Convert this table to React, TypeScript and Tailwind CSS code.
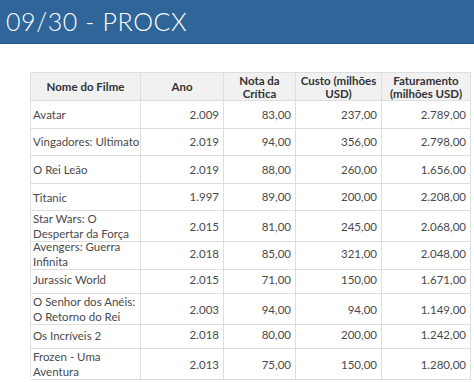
const rows: [string[], string, string, string, string][] = [
  [["Avatar"], "2.009", "83,00", "237,00", "2.789,00"],
  [["Vingadores: Ultimato"], "2.019", "94,00", "356,00", "2.798,00"],
  [["O Rei Leão"], "2.019", "88,00", "260,00", "1.656,00"],
  [["Titanic"], "1.997", "89,00", "200,00", "2.208,00"],
  [["Star Wars: O", "Despertar da Força"], "2.015", "81,00", "245,00", "2.068,00"],
  [["Avengers: Guerra", "Infinita"], "2.018", "85,00", "321,00", "2.048,00"],
  [["Jurassic World"], "2.015", "71,00", "150,00", "1.671,00"],
  [["O Senhor dos Anéis:", "O Retorno do Rei"], "2.003", "94,00", "94,00", "1.149,00"],
  [["Os Incríveis 2"], "2.018", "80,00", "200,00", "1.242,00"],
  [["Frozen - Uma", "Aventura"], "2.013", "75,00", "150,00", "1.280,00"],
];

const headers = [
  ["Nome do Filme"],
  ["Ano"],
  ["Nota da", "Crítica"],
  ["Custo (milhões", "USD)"],
  ["Faturamento", "(milhões USD)"],
];

const cols = "grid grid-cols-[110px_83px_72px_86px_89px]";

export default function App() {
  return (
    <div className="w-[474px] h-[382px] bg-white overflow-hidden font-['Lato','Liberation_Sans',sans-serif]">
      {/* Title band */}
      <div className="h-[44px] bg-[#2f6598] border-b border-[#285985] flex items-center pl-[6px]">
        <h1 className="text-[25px] font-light text-white tracking-[0.6px] leading-none">09/30 - PROCX</h1>
      </div>

      <div className="pl-[30px] pt-[28px]">
        <div className="w-[441px] border-l border-t border-[#dedede] text-[11.5px] text-[#4a4a4a]">
          <div className={`${cols} h-[28px] bg-[#f1f1f1]`}>
            {headers.map((h) => (
              <div
                key={h.join()}
                className="border-r border-b border-[#dedede] flex flex-col items-center justify-center font-bold text-[#333] leading-[13px] whitespace-nowrap"
              >
                {h.map((l) => (
                  <span key={l}>{l}</span>
                ))}
              </div>
            ))}
          </div>
          {rows.map((r) => (
            <div key={r[0].join()} className={`${cols} h-[27.6px]`}>
              <div className="border-r border-b border-[#dedede] pl-[2px] flex flex-col justify-center leading-[15px] whitespace-nowrap">
                {r[0].map((l) => (
                  <span key={l}>{l}</span>
                ))}
              </div>
              {r.slice(1).map((v, i) => (
                <div key={i} className="border-r border-b border-[#dedede] pr-[4px] flex items-center justify-end">
                  {v as string}
                </div>
              ))}
            </div>
          ))}
        </div>
      </div>
    </div>
  );
}
